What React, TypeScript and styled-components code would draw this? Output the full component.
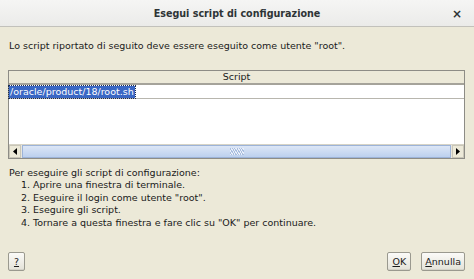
import styled, { createGlobalStyle } from "styled-components";

const Global = createGlobalStyle`
  html, body {
    margin: 0;
    padding: 0;
    background: #ece9d8;
  }
  body {
    font-family: "DejaVu Sans", "Liberation Sans", sans-serif;
    font-size: 9.5px;
    color: #1a1a1a;
  }
`;

const Dialog = styled.div`
  width: 474px;
  height: 279px;
  display: flex;
  flex-direction: column;
  background: #ece9d8;
  overflow: hidden;
`;

const TitleBar = styled.div`
  height: 27px;
  flex: none;
  display: flex;
  align-items: center;
  justify-content: center;
  position: relative;
  background: linear-gradient(#f5f5f4, #ebebe9);
  border-bottom: 1px solid #c2c1bb;
  box-sizing: border-box;
`;

const Title = styled.div`
  font-weight: bold;
  font-size: 9.6px;
  color: #2e3436;
`;

const Close = styled.div`
  position: absolute;
  right: 12px;
  top: 8px;
  font-size: 12px;
  font-weight: bold;
  color: #2e3436;
  line-height: 12px;
`;

const Body = styled.div`
  flex: 1;
  display: flex;
  flex-direction: column;
  padding: 12px 9px 8px 8px;
`;

const Message = styled.div`
  padding-left: 1px;
  line-height: 13px;
`;

const Table = styled.div`
  margin-top: 18px;
  width: 457px;
  height: 89px;
  border: 1px solid #8d8c86;
  box-sizing: border-box;
  display: flex;
  flex-direction: column;
  background: #fff;
`;

const Header = styled.div`
  height: 12px;
  flex: none;
  background: #ece9d8;
  border-bottom: 2px solid #a5a39a;
  display: flex;
  align-items: center;
  justify-content: center;
  line-height: 12px;
`;

const Row = styled.div`
  height: 13px;
  flex: none;
  border-bottom: 1px solid #b8b6ae;
  display: flex;
  align-items: center;
`;

const Selected = styled.span`
  background: #3a67c4;
  color: #fff;
  outline: 1px dotted #1c2c50;
  padding: 0 1px;
  line-height: 12px;
`;

const Empty = styled.div`
  flex: 1;
`;

const Scrollbar = styled.div`
  height: 13px;
  flex: none;
  display: flex;
  background: #e8e6dc;
  border-top: 1px solid #d6d3c6;
`;

const Arrow = styled.div`
  width: 12px;
  flex: none;
  display: flex;
  align-items: center;
  justify-content: center;
  background: #ece9d8;
  border: 1px solid #c9c6b8;
  box-sizing: border-box;
`;

const Thumb = styled.div`
  flex: 1;
  margin: 0 1px;
  background: linear-gradient(#dce6f6, #bcd0ee);
  border: 1px solid #9cb3d8;
  box-sizing: border-box;
  display: flex;
  align-items: center;
  justify-content: center;
`;

const Grip = styled.div`
  width: 14px;
  height: 7px;
  background: repeating-linear-gradient(
    60deg,
    #e8eef9 0px,
    #e8eef9 1px,
    #a9bedf 1px,
    #a9bedf 2px
  );
`;

const Instructions = styled.div`
  margin-top: 8px;
  padding-left: 1px;
  line-height: 12.4px;
`;

const Steps = styled.ol`
  margin: 0;
  padding-left: 24px;
`;

const Footer = styled.div`
  margin-top: auto;
  display: flex;
  align-items: center;
  gap: 10px;
`;

const Button = styled.button<{ $width?: number }>`
  font-family: "DejaVu Sans", "Liberation Sans", sans-serif;
  font-size: 9.5px;
  color: #1a1a1a;
  height: 19px;
  width: ${(p) => (p.$width ? `${p.$width}px` : "auto")};
  padding: 0 3px;
  border: 1px solid #9a998f;
  border-radius: 2px;
  background: linear-gradient(#fbfbf8, #e4e2d8);
  box-shadow: inset 0 -1px 0 #d5d3c9;
  line-height: 15px;
`;

const Spacer = styled.div`
  flex: 1;
`;

function ArrowIcon({ dir }: { dir: "left" | "right" }) {
  return (
    <svg width="4" height="7" viewBox="0 0 4 7">
      <path d={dir === "left" ? "M4 0 L0 3.5 L4 7 Z" : "M0 0 L4 3.5 L0 7 Z"} fill="#000" />
    </svg>
  );
}

export default function App() {
  return (
    <Dialog>
      <Global />
      <TitleBar>
        <Title>Esegui script di configurazione</Title>
        <Close>×</Close>
      </TitleBar>
      <Body>
        <Message>Lo script riportato di seguito deve essere eseguito come utente "root".</Message>
        <Table>
          <Header>Script</Header>
          <Row>
            <Selected>/oracle/product/18/root.sh</Selected>
          </Row>
          <Empty />
          <Scrollbar>
            <Arrow>
              <ArrowIcon dir="left" />
            </Arrow>
            <Thumb>
              <Grip />
            </Thumb>
            <Arrow>
              <ArrowIcon dir="right" />
            </Arrow>
          </Scrollbar>
        </Table>
        <Instructions>
          Per eseguire gli script di configurazione:
          <Steps>
            <li>Aprire una finestra di terminale.</li>
            <li>Eseguire il login come utente "root".</li>
            <li>Eseguire gli script.</li>
            <li>Tornare a questa finestra e fare clic su "OK" per continuare.</li>
          </Steps>
        </Instructions>
        <Footer>
          <Button $width={17}>
            <u>?</u>
          </Button>
          <Spacer />
          <Button $width={24}>
            <u>O</u>K
          </Button>
          <Button>
            <u>A</u>nnulla
          </Button>
        </Footer>
      </Body>
    </Dialog>
  );
}
